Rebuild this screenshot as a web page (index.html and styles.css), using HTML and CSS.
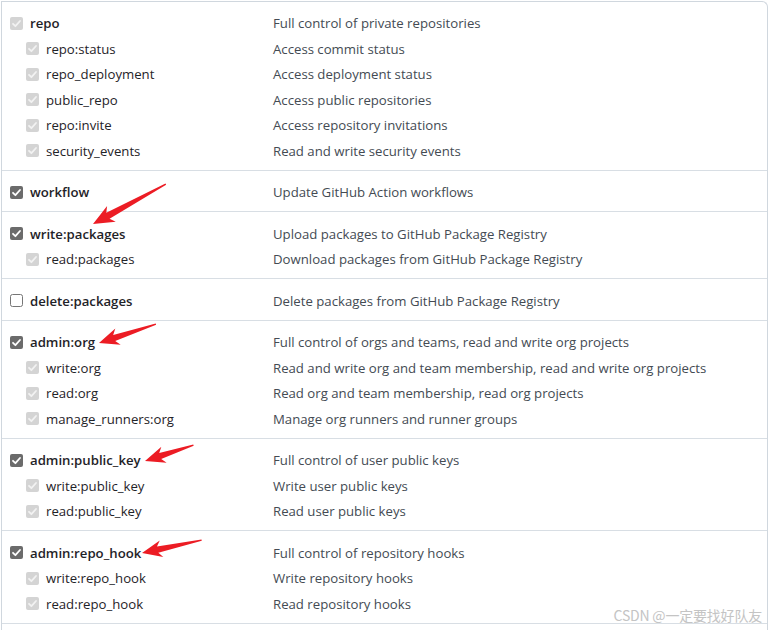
FILE: index.html
```html
<!DOCTYPE html>
<html lang="en">
<head>
<meta charset="utf-8">
<title>Scopes</title>
<link rel="stylesheet" href="styles.css">
</head>
<body>
<div class="page">
  <div class="scopes">
    <section class="group">
      <div class="row main"><span class="scope"><span class="cb cb-dis"><svg viewBox="0 0 13 13"><polyline points="3,6.8 5.4,9.2 10,4"/></svg></span><span class="name">repo</span></span><span class="desc">Full control of private repositories</span></div>
      <div class="row sub"><span class="scope"><span class="cb cb-dis"><svg viewBox="0 0 13 13"><polyline points="3,6.8 5.4,9.2 10,4"/></svg></span><span class="name">repo:status</span></span><span class="desc">Access commit status</span></div>
      <div class="row sub"><span class="scope"><span class="cb cb-dis"><svg viewBox="0 0 13 13"><polyline points="3,6.8 5.4,9.2 10,4"/></svg></span><span class="name">repo_deployment</span></span><span class="desc">Access deployment status</span></div>
      <div class="row sub"><span class="scope"><span class="cb cb-dis"><svg viewBox="0 0 13 13"><polyline points="3,6.8 5.4,9.2 10,4"/></svg></span><span class="name">public_repo</span></span><span class="desc">Access public repositories</span></div>
      <div class="row sub"><span class="scope"><span class="cb cb-dis"><svg viewBox="0 0 13 13"><polyline points="3,6.8 5.4,9.2 10,4"/></svg></span><span class="name">repo:invite</span></span><span class="desc">Access repository invitations</span></div>
      <div class="row sub"><span class="scope"><span class="cb cb-dis"><svg viewBox="0 0 13 13"><polyline points="3,6.8 5.4,9.2 10,4"/></svg></span><span class="name">security_events</span></span><span class="desc">Read and write security events</span></div>
    </section>
    <section class="group">
      <div class="row main"><span class="scope"><span class="cb cb-on"><svg viewBox="0 0 13 13"><polyline points="3,6.8 5.4,9.2 10,4"/></svg></span><span class="name">workflow</span></span><span class="desc">Update GitHub Action workflows</span></div>
    </section>
    <section class="group">
      <div class="row main"><span class="scope"><span class="cb cb-on"><svg viewBox="0 0 13 13"><polyline points="3,6.8 5.4,9.2 10,4"/></svg></span><span class="name">write:packages</span></span><span class="desc">Upload packages to GitHub Package Registry</span></div>
      <div class="row sub"><span class="scope"><span class="cb cb-dis"><svg viewBox="0 0 13 13"><polyline points="3,6.8 5.4,9.2 10,4"/></svg></span><span class="name">read:packages</span></span><span class="desc">Download packages from GitHub Package Registry</span></div>
    </section>
    <section class="group">
      <div class="row main"><span class="scope"><span class="cb cb-off"></span><span class="name">delete:packages</span></span><span class="desc">Delete packages from GitHub Package Registry</span></div>
    </section>
    <section class="group">
      <div class="row main"><span class="scope"><span class="cb cb-on"><svg viewBox="0 0 13 13"><polyline points="3,6.8 5.4,9.2 10,4"/></svg></span><span class="name">admin:org</span></span><span class="desc">Full control of orgs and teams, read and write org projects</span></div>
      <div class="row sub"><span class="scope"><span class="cb cb-dis"><svg viewBox="0 0 13 13"><polyline points="3,6.8 5.4,9.2 10,4"/></svg></span><span class="name">write:org</span></span><span class="desc">Read and write org and team membership, read and write org projects</span></div>
      <div class="row sub"><span class="scope"><span class="cb cb-dis"><svg viewBox="0 0 13 13"><polyline points="3,6.8 5.4,9.2 10,4"/></svg></span><span class="name">read:org</span></span><span class="desc">Read org and team membership, read org projects</span></div>
      <div class="row sub"><span class="scope"><span class="cb cb-dis"><svg viewBox="0 0 13 13"><polyline points="3,6.8 5.4,9.2 10,4"/></svg></span><span class="name">manage_runners:org</span></span><span class="desc">Manage org runners and runner groups</span></div>
    </section>
    <section class="group">
      <div class="row main"><span class="scope"><span class="cb cb-on"><svg viewBox="0 0 13 13"><polyline points="3,6.8 5.4,9.2 10,4"/></svg></span><span class="name">admin:public_key</span></span><span class="desc">Full control of user public keys</span></div>
      <div class="row sub"><span class="scope"><span class="cb cb-dis"><svg viewBox="0 0 13 13"><polyline points="3,6.8 5.4,9.2 10,4"/></svg></span><span class="name">write:public_key</span></span><span class="desc">Write user public keys</span></div>
      <div class="row sub"><span class="scope"><span class="cb cb-dis"><svg viewBox="0 0 13 13"><polyline points="3,6.8 5.4,9.2 10,4"/></svg></span><span class="name">read:public_key</span></span><span class="desc">Read user public keys</span></div>
    </section>
    <section class="group">
      <div class="row main"><span class="scope"><span class="cb cb-on"><svg viewBox="0 0 13 13"><polyline points="3,6.8 5.4,9.2 10,4"/></svg></span><span class="name">admin:repo_hook</span></span><span class="desc">Full control of repository hooks</span></div>
      <div class="row sub"><span class="scope"><span class="cb cb-dis"><svg viewBox="0 0 13 13"><polyline points="3,6.8 5.4,9.2 10,4"/></svg></span><span class="name">write:repo_hook</span></span><span class="desc">Write repository hooks</span></div>
      <div class="row sub"><span class="scope"><span class="cb cb-dis"><svg viewBox="0 0 13 13"><polyline points="3,6.8 5.4,9.2 10,4"/></svg></span><span class="name">read:repo_hook</span></span><span class="desc">Read repository hooks</span></div>
    </section>
    <section class="group group-tail"></section>
  </div>

  <svg class="arrows" width="769" height="630" viewBox="0 0 769 630" aria-hidden="true">
    <polygon transform="translate(93,224) rotate(151.3)" points="0,0 -21,-9 -17,-3.4 -83,-0.7 -83,0.7 -17,3.4 -21,9"/>
    <polygon transform="translate(99,343) rotate(161.6)" points="0,0 -20,-8.5 -16,-3.2 -60,-0.7 -60,0.7 -16,3.2 -20,8.5"/>
    <polygon transform="translate(145,461) rotate(161.9)" points="0,0 -20,-8.5 -16,-3.2 -51,-0.7 -51,0.7 -16,3.2 -20,8.5"/>
    <polygon transform="translate(142,553) rotate(167.8)" points="0,0 -20,-8.5 -16,-3.2 -61,-0.7 -61,0.7 -16,3.2 -20,8.5"/>
  </svg>

  <div class="watermark">CSDN @一定要找好队友</div>
</div>
</body>
</html>
```

FILE: styles.css
```css
html, body {
  margin: 0;
  padding: 0;
  background: #ffffff;
}

body {
  font-family: "Open Sans", "Noto Sans", "Noto Sans CJK SC", sans-serif;
  font-size: 13.2px;
  color: #1f2328;
}

.page {
  position: relative;
  width: 769px;
  height: 630px;
  overflow: hidden;
}

.scopes {
  margin: 1px 0 0 1px;
  width: 767px;
  box-sizing: border-box;
  border: 1px solid #d0d7de;
  border-bottom: none;
  border-top-right-radius: 6px;
}

.group {
  padding: 7.6px 0 7.4px;
  border-top: 1px solid #d8dee4;
}

.group:first-child {
  border-top: none;
}

.group-tail {
  height: 40px;
}

.row {
  display: grid;
  grid-template-columns: 271px 1fr;
  align-items: center;
  height: 25.5px;
  box-sizing: border-box;
  padding-top: 2px;
}

.scope {
  display: flex;
  align-items: center;
  gap: 7px;
}

.main .scope {
  padding-left: 8px;
}

.main .name {
  font-weight: 600;
}

.sub .scope {
  padding-left: 24px;
}

.desc {
  color: #444b53;
}

.cb {
  display: inline-flex;
  width: 13px;
  height: 13px;
  box-sizing: border-box;
  border-radius: 2px;
  flex: none;
}

.cb svg {
  width: 13px;
  height: 13px;
  fill: none;
  stroke-width: 1.8;
  stroke-linecap: round;
  stroke-linejoin: round;
}

.cb-on {
  background: #6b6b6b;
}

.cb-on svg {
  stroke: #ffffff;
}

.cb-dis {
  background: #d4d4d4;
}

.cb-dis svg {
  stroke: #f2f2f2;
}

.cb-off {
  background: #ffffff;
  border: 1px solid #767676;
  border-radius: 2.5px;
}

.arrows {
  position: absolute;
  left: 0;
  top: 0;
  pointer-events: none;
}

.arrows polygon {
  fill: #ec1c24;
}

.watermark {
  position: absolute;
  right: 7px;
  top: 605px;
  font-family: "Noto Sans CJK SC", "Noto Sans", sans-serif;
  font-size: 14px;
  color: #c4c4c4;
  letter-spacing: -0.2px;
  text-shadow: 0 0 1px #ffffff;
}
```
